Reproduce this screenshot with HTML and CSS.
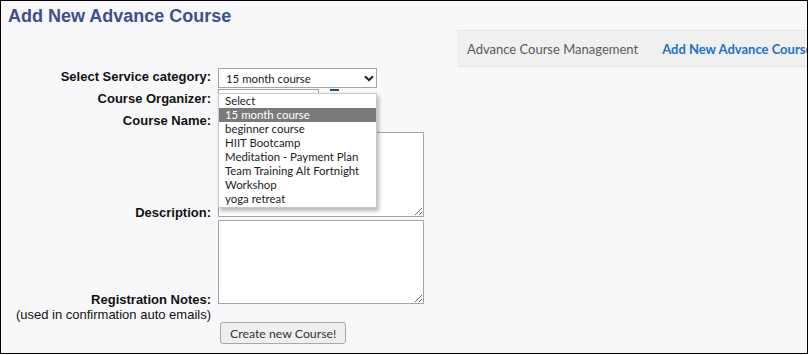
FILE: index.html
```html
<!DOCTYPE html>
<html lang="en">
<head>
<meta charset="utf-8">
<title>Add New Advance Course</title>
<link rel="stylesheet" href="styles.css">
</head>
<body>
<div class="frame">
  <h1 class="title">Add New Advance Course</h1>
  <nav class="crumbs">
    <span class="crumb">Advance Course Management</span>
    <span class="crumb crumb-active">Add New Advance Course</span>
  </nav>
  <form class="form">
    <label class="lbl lbl-row1">Select Service category:</label>
    <div class="field select-wrap">
      <select class="select">
        <option>Select</option>
        <option selected>15 month course</option>
      </select>
      <svg class="chev" width="10" height="7" viewBox="0 0 10 7"><path d="M1 1.2 L5 5.2 L9 1.2" fill="none" stroke="#222" stroke-width="2"/></svg>
      <ul class="dropdown">
        <li>Select</li>
        <li class="hl">15 month course</li>
        <li>beginner course</li>
        <li>HIIT Bootcamp</li>
        <li>Meditation - Payment Plan</li>
        <li>Team Training Alt Fortnight</li>
        <li>Workshop</li>
        <li>yoga retreat</li>
      </ul>
    </div>

    <label class="lbl lbl-mid">Course Organizer:</label>
    <div class="field org">
      <input class="input input-org" type="text">
      <svg class="org-icon" width="10" height="14" viewBox="0 0 10 14"><rect x="0" y="0" width="9" height="2" fill="#1f4f7a"/><rect x="0.5" y="5.5" width="8" height="8" fill="none" stroke="#1f4f7a"/></svg>
    </div>

    <label class="lbl lbl-mid">Course Name:</label>
    <div class="field name">
      <input class="input input-name" type="text">
    </div>

    <label class="lbl lbl-end">Description:</label>
    <div class="field desc">
      <textarea class="ta"></textarea>
    </div>

    <label class="lbl lbl-end">Registration Notes:</label>
    <div class="field notes">
      <textarea class="ta ta-notes"></textarea>
    </div>

    <div class="lbl-note">(used in confirmation auto emails)</div>
    <div></div>

    <div></div>
    <div class="field">
      <button type="button" class="btn">Create new Course!</button>
    </div>
  </form>
</div>
</body>
</html>
```

FILE: styles.css
```css
* { box-sizing: border-box; }
html, body { margin: 0; padding: 0; background: #fff; }
body { width: 809px; height: 355px; overflow: hidden; }

.frame {
  width: 808px;
  height: 354px;
  border: 1px solid #000;
  background: #f8f8fa;
  overflow: hidden;
  padding-top: 5px;
  font-family: "Liberation Sans", Arial, sans-serif;
}

.title {
  margin: 0 0 0 7px;
  font-size: 18px;
  line-height: 21px;
  font-weight: bold;
  color: #3d4f8e;
}

.crumbs {
  margin: 3px 0 0 456px;
  height: 37px;
  background: #f0f0f0;
  border-top: 1px solid #e6e6e6;
  border-bottom: 1px solid #e6e6e6;
  display: flex;
  align-items: center;
  gap: 24px;
  padding-left: 10px;
  white-space: nowrap;
  overflow: hidden;
  font-family: Lato, "Liberation Sans", sans-serif;
  font-size: 13px;
}
.crumb { color: #5a5a5a; flex: none; }
.crumb-active { color: #1c72c6; font-weight: bold; }

.form {
  margin-top: 1px;
  display: grid;
  grid-template-columns: 210px 1fr;
  column-gap: 7px;
  font-size: 13px;
  color: #111;
}

.lbl {
  text-align: right;
  font-weight: bold;
  white-space: nowrap;
}
.lbl-row1 { line-height: 17px; }
.lbl-mid { line-height: 22px; }
.lbl-end { align-self: end; line-height: 15px; margin-bottom: -3px; }

.lbl-note {
  text-align: right;
  white-space: nowrap;
  line-height: 15px;
  margin-top: 3px;
}

.field { position: relative; }

.select-wrap { height: 20px; }
.select {
  appearance: none;
  -webkit-appearance: none;
  width: 159px;
  height: 20px;
  margin: 0;
  border: 1px solid #a5a5a5;
  border-radius: 0;
  background: #fff;
  padding: 0 0 0 7px;
  font-family: Lato, "Liberation Sans", sans-serif;
  font-size: 11.4px;
  color: #222;
  display: block;
}
.chev { position: absolute; left: 146px; top: 7px; }

.dropdown {
  position: absolute;
  left: 0;
  top: 25px;
  width: 159px;
  margin: 0;
  padding: 0 0 1px 0;
  list-style: none;
  background: #fff;
  border: 1px solid #c8c8c8;
  box-shadow: 2px 3px 4px rgba(0,0,0,0.28);
  font-family: Lato, "Liberation Sans", sans-serif;
  font-size: 11.4px;
  color: #222;
  z-index: 10;
}
.dropdown li {
  height: 14px;
  line-height: 14px;
  padding-left: 6px;
  white-space: nowrap;
}
.dropdown li.hl { background: #7a7a7a; color: #fff; }

.org, .name { height: 22px; }
.input {
  display: block;
  margin: 1px 0 0 0;
  height: 20px;
  border: 1px solid #a5a5a5;
  background: #fff;
  padding: 0;
}
.input-org { width: 101px; }
.input-name { width: 159px; }
.org { display: flex; align-items: flex-start; gap: 11px; }
.org-icon { margin-top: 1px; display: block; }

.ta {
  display: block;
  width: 206px;
  height: 85px;
  margin: 0;
  border: 1px solid #a5a5a5;
  background: #fff;
  padding: 2px;
  font-family: Lato, "Liberation Sans", sans-serif;
}
.notes { margin-top: 3px; }
.ta-notes { height: 84px; }

.btn {
  margin: 0 0 0 2px;
  height: 22px;
  padding: 0 9px;
  background: #efefef;
  border: 1px solid #a8a8a8;
  border-radius: 3px;
  font-family: Lato, "Liberation Sans", sans-serif;
  font-size: 12.3px;
  color: #333;
}
```
